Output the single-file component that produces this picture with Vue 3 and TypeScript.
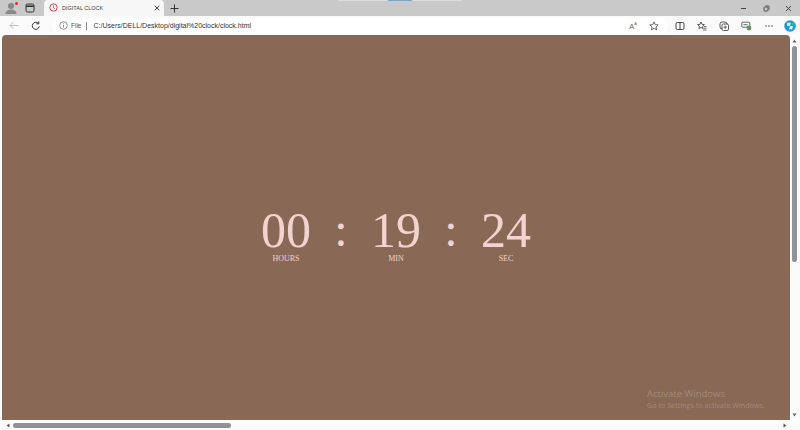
<script setup lang="ts">
interface Unit { value: string; label: string }
const units: Unit[] = [
  { value: '00', label: 'HOURS' },
  { value: '19', label: 'MIN' },
  { value: '24', label: 'SEC' },
]
</script>

<template>
  <div class="window">
    <div class="tabstrip">
      <div class="strip-left">
        <svg class="profile" width="14" height="14" viewBox="0 0 14 14">
          <circle cx="6" cy="5" r="3" fill="#8a8a8a" />
          <path d="M.5 13c0-3 2.500-4.500 5.500-4.500s5.500 1.500 5.500 4.500z" fill="#8a8a8a" />
          <circle cx="11.500" cy="2.500" r="1.500" fill="#d9343a" />
        </svg>
        <svg class="tabs-icon" width="10" height="10" viewBox="0 0 10 10">
          <rect x="1" y="1" width="8" height="8" rx="1.500" fill="none" stroke="#333" stroke-width="1" />
          <path d="M1 3.200h8" stroke="#333" stroke-width="1.600" />
        </svg>
      </div>
      <div class="tab">
        <svg width="9" height="9" viewBox="0 0 9 9">
          <circle cx="4.500" cy="4.500" r="3.700" fill="none" stroke="#d2484c" stroke-width="1" />
          <path d="M4.500 2.400v2.300l1.500 1" fill="none" stroke="#d2484c" stroke-width=".8" />
        </svg>
        <span class="tab-title">DIGITAL CLOCK</span>
        <svg class="tab-close" width="6" height="6" viewBox="0 0 6 6">
          <path d="M.7.700l4.600 4.600M5.300.700L.7 5.300" stroke="#333" stroke-width=".9" />
        </svg>
      </div>
      <svg class="new-tab" width="9" height="9" viewBox="0 0 9 9">
        <path d="M4.500.5v8M.5 4.500h8" stroke="#333" stroke-width="1" />
      </svg>
      <div class="notch"></div>
      <div class="win-controls">
        <svg width="7" height="7" viewBox="0 0 7 7"><path d="M1 3.500h5" stroke="#444" stroke-width="1" /></svg>
        <svg width="7" height="7" viewBox="0 0 7 7">
          <rect x="1" y="2" width="4" height="4" rx=".8" fill="none" stroke="#444" stroke-width=".9" />
          <path d="M2.500.9h2.800q.8 0 .8.8v2.800" fill="none" stroke="#444" stroke-width=".8" />
        </svg>
        <svg width="7" height="7" viewBox="0 0 7 7"><path d="M1 1l5 5M6 1L1 6" stroke="#444" stroke-width="1" /></svg>
      </div>
    </div>

    <div class="toolbar">
      <svg class="back" width="10" height="9" viewBox="0 0 10 9">
        <path d="M9.500 4.500H1M4.500 1L1 4.500 4.500 8" fill="none" stroke="#c2c2c2" stroke-width="1" />
      </svg>
      <svg class="reload" width="10" height="10" viewBox="0 0 10 10">
        <path d="M8.300 5.400A3.500 3.500 0 1 1 7.200 2.200" fill="none" stroke="#333" stroke-width="1" />
        <path d="M7.800.4v2.400H5.400" fill="none" stroke="#333" stroke-width="1" />
      </svg>
      <div class="address">
        <svg width="9" height="9" viewBox="0 0 9 9">
          <circle cx="4.500" cy="4.500" r="3.800" fill="none" stroke="#777" stroke-width=".8" />
          <path d="M4.500 4v2.600M4.500 2.300v1" stroke="#777" stroke-width=".8" />
        </svg>
        <span class="scheme">File</span>
        <span class="sep"></span>
        <span class="url">C:/Users/DELL/Desktop/digital%20clock/clock.html</span>
        <span class="spacer"></span>
        <span class="read-aloud">A<sup>A</sup></span>
        <svg class="star" width="10" height="10" viewBox="0 0 10 10">
          <path d="M5 .9l1.250 2.700 2.950.35-2.200 2 .6 2.950L5 7.400 2.400 8.900l.6-2.950-2.200-2 2.950-.35z" fill="none" stroke="#444" stroke-width=".8" />
        </svg>
      </div>
      <div class="tools">
        <svg width="10" height="10" viewBox="0 0 10 10">
          <rect x="1" y="1.500" width="8" height="7" rx="1.500" fill="none" stroke="#333" stroke-width=".9" />
          <path d="M5 1.500v7" stroke="#333" stroke-width=".9" />
        </svg>
        <svg width="10" height="10" viewBox="0 0 10 10">
          <path d="M4 1l1 2.300 2.400.3-1.800 1.600.5 2.400L4 6.400 1.900 7.600l.5-2.400L.6 3.600 3 3.300z" fill="none" stroke="#333" stroke-width=".8" />
          <path d="M7 5.500h2.500M7 7.200h2.500M6 9h3.500" stroke="#333" stroke-width=".7" />
        </svg>
        <svg width="10" height="10" viewBox="0 0 10 10">
          <rect x="1" y="1" width="7" height="7" rx="2" fill="none" stroke="#333" stroke-width=".8" />
          <rect x="3" y="3" width="6.500" height="6.500" rx="1.500" fill="#fff" stroke="#333" stroke-width=".8" />
          <path d="M6.200 4.500v3.500M4.500 6.200H8" stroke="#333" stroke-width=".7" />
        </svg>
        <svg width="11" height="10" viewBox="0 0 11 10">
          <rect x=".8" y="1.200" width="8" height="5" rx=".8" fill="none" stroke="#444" stroke-width=".8" />
          <path d="M2.500 3.700h4" stroke="#444" stroke-width=".8" />
          <circle cx="8" cy="7" r="2.400" fill="#5a9a62" />
        </svg>
        <svg class="more" width="10" height="10" viewBox="0 0 10 10">
          <circle cx="2" cy="5" r=".7" fill="#333" />
          <circle cx="5" cy="5" r=".7" fill="#333" />
          <circle cx="8" cy="5" r=".7" fill="#333" />
        </svg>
        <svg class="copilot" width="12" height="12" viewBox="0 0 12 12">
          <circle cx="6" cy="6" r="5.800" fill="#1c9bd8" />
          <path d="M3.200 2.800h3.600l-1 3.200H3.200z" fill="#e9f6fc" />
          <path d="M6.200 6h2.800L8.200 9.300H5z" fill="#e9f6fc" />
          <path d="M7.500 2.500h2l.5 2.500-2 .5z" fill="#17c3a2" />
        </svg>
      </div>
    </div>

    <div class="viewport">
      <main class="page">
        <div class="clock">
          <template v-for="(unit, i) in units" :key="unit.label">
            <div v-if="i > 0" class="colon">:</div>
            <div class="unit">
              <div class="value">{{ unit.value }}</div>
              <div class="label">{{ unit.label }}</div>
            </div>
          </template>
        </div>
        <div class="activate">
          <div class="activate-title">Activate Windows</div>
          <div class="activate-sub">Go to Settings to activate Windows.</div>
        </div>
      </main>
      <div class="vscroll">
        <svg width="5" height="4" viewBox="0 0 5 4"><path d="M2.500.5L4.500 3.500H.5z" fill="#666" /></svg>
        <div class="vthumb"></div>
        <span class="grow"></span>
        <svg width="5" height="4" viewBox="0 0 5 4"><path d="M.5.5h4l-2 3z" fill="#666" /></svg>
      </div>
      <div class="hscroll">
        <svg width="4" height="5" viewBox="0 0 4 5"><path d="M3.500.5v4L.5 2.500z" fill="#555" /></svg>
        <div class="hthumb"></div>
        <span class="grow"></span>
        <svg width="4" height="5" viewBox="0 0 4 5"><path d="M.5.5v4l3-2z" fill="#555" /></svg>
      </div>
      <div class="corner"></div>
    </div>
  </div>
</template>

<style>
html, body { margin: 0; padding: 0; overflow: hidden; }
</style>

<style scoped>
.window {
  width: 800px;
  height: 430px;
  display: flex;
  flex-direction: column;
  background: #fbfbfb;
  font-family: "Liberation Sans", Arial, sans-serif;
  overflow: hidden;
}
.tabstrip {
  height: 16px;
  display: flex;
  align-items: center;
  background: #c9c9c9;
  position: relative;
  flex: none;
}
.strip-left {
  width: 44px;
  display: flex;
  align-items: center;
  padding-left: 5px;
  box-sizing: border-box;
  gap: 6px;
}
.tab {
  width: 120px;
  height: 16px;
  display: flex;
  align-items: center;
  background: #f7f7f7;
  border-radius: 4px 4px 0 0;
  padding: 0 4px 1px 5px;
  box-sizing: border-box;
  gap: 4px;
}
.tab-title {
  font-size: 5.500px;
  color: #444;
  flex: 1;
}
.new-tab { margin-left: 6px; }
.notch {
  position: absolute;
  left: 338px;
  top: 0;
  width: 124px;
  height: 1px;
  background: #dcdcdc;
}
.notch::after {
  content: "";
  position: absolute;
  left: 50px;
  top: 0;
  width: 24px;
  height: 1px;
  background: #7fa3c7;
}
.win-controls {
  margin-left: auto;
  display: flex;
  width: 60px;
  justify-content: space-between;
  padding-right: 8px;
  box-sizing: border-box;
}
.toolbar {
  height: 19px;
  display: flex;
  align-items: center;
  background: #fafafa;
  flex: none;
}
.back { margin-left: 9px; }
.reload { margin-left: 12px; }
.address {
  margin-left: 11px;
  width: 616px;
  height: 16px;
  background: #fff;
  border-radius: 8px;
  display: flex;
  align-items: center;
  padding: 0 9px 0 7px;
  box-sizing: border-box;
}
.scheme {
  margin-left: 3px;
  font-size: 6.500px;
  color: #555;
}
.sep {
  width: 1px;
  height: 8px;
  background: #888;
  margin: 0 6px 0 5px;
}
.url {
  font-size: 7px;
  color: #333;
}
.spacer, .grow { flex: 1; }
.read-aloud {
  font-size: 7.500px;
  color: #666;
  margin-right: 12px;
}
.read-aloud sup { font-size: 4px; }
.tools {
  flex: 1;
  display: flex;
  align-items: center;
  padding-left: 7px;
  gap: 12px;
}
.copilot { margin-left: -2px; }
.viewport {
  flex: 1;
  display: grid;
  grid-template-columns: 788px 1fr;
  grid-template-rows: 385px 1fr;
  padding-left: 2px;
  min-height: 0;
}
.page {
  background: #896855;
  border-radius: 4px 4px 0 0;
  display: flex;
  align-items: center;
  justify-content: center;
  position: relative;
}
.clock {
  display: grid;
  grid-template-columns: 60px 50px 60px 50px 60px;
  align-items: start;
  font-family: "Liberation Serif", "Times New Roman", serif;
  color: #f2d3cf;
  text-align: center;
  margin-top: 14px;
}
.value, .colon {
  font-size: 50px;
  line-height: 48px;
}
.label {
  font-size: 8px;
  line-height: 9px;
}
.colon { font-size: 48px; }
.activate {
  position: absolute;
  left: 645px;
  top: 353px;
  color: rgba(255, 255, 255, 0.24);
  font-family: "Open Sans", sans-serif;
}
.activate-title { font-size: 9.500px; line-height: 12px; }
.activate-sub { font-size: 7.200px; line-height: 11px; }
.vscroll {
  background: #fbfbfb;
  display: flex;
  flex-direction: column;
  align-items: center;
  padding: 4px 2px 3px 0;
  box-sizing: border-box;
}
.vthumb {
  width: 5px;
  height: 216px;
  margin-top: 3px;
  background: #8f9296;
  border-radius: 3px;
}
.hscroll {
  background: #fbfbfb;
  display: flex;
  align-items: center;
  padding: 0 3px 0 4px;
}
.hthumb {
  width: 218px;
  height: 5px;
  margin-left: 3px;
  background: #8f9296;
  border-radius: 3px;
}
.corner { background: #fbfbfb; }
</style>
